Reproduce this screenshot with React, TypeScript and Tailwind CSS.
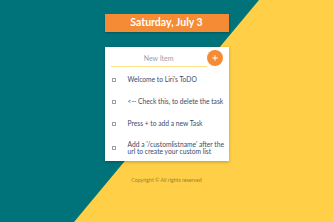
import { Plus } from 'lucide-react';

const tasks = [
  'Welcome to Liri\u2019s ToDO',
  '<-- Check this, to delete the task',
  'Press + to add a new Task',
  "Add a '/customlistname' after the url to create your custom list",
];

export default function App() {
  return (
    <div className="relative h-[222px] w-full overflow-hidden bg-[#00737a] font-['Lato',sans-serif]">
      <svg className="absolute inset-0 h-full w-full" viewBox="0 0 333 222" preserveAspectRatio="none">
        <polygon points="259,0 333,0 333,222 74,222" fill="#fecf47" />
      </svg>

      <div className="relative flex flex-col items-center pt-[14px]">
        <div className="flex h-[18px] w-[124px] items-center justify-center bg-[#f58b34] text-[10.5px] font-bold text-white shadow-[0_1px_2px_rgba(0,0,0,0.25)]">
          Saturday, July 3
        </div>

        <div className="mt-[15px] w-[124px] bg-white shadow-[0_1px_3px_rgba(0,0,0,0.25)]">
          <div className="flex items-start px-[6px] pt-[3px]">
            <input
              placeholder="New Item"
              className="h-[17px] w-[98px] border-b border-[#fde08a] bg-transparent text-center text-[7px] text-gray-700 outline-none placeholder:text-gray-400"
            />
            <button className="flex h-[16px] w-[16px] items-center justify-center rounded-full bg-[#f58b34] text-white">
              <Plus size={8} strokeWidth={3} />
            </button>
          </div>

          <div className="mt-[2px] flex flex-col">
            {tasks.map((t, i) => (
              <div key={i} className={`flex items-center ${i === 3 ? 'h-[26px]' : 'h-[22px]'}`}>
                <span className="ml-[7px] h-[4px] w-[4px] shrink-0 border border-gray-400" />
                <p className={`ml-[12px] pr-[3px] text-[6.7px] leading-[7.5px] text-[#3d4a6b] ${i === 3 ? '' : 'whitespace-nowrap'}`}>{t}</p>
              </div>
            ))}
          </div>
        </div>

        <p className="mt-[16px] text-[5.2px] text-[#9a8428]">Copyright © All rights reserved</p>
      </div>
    </div>
  );
}
